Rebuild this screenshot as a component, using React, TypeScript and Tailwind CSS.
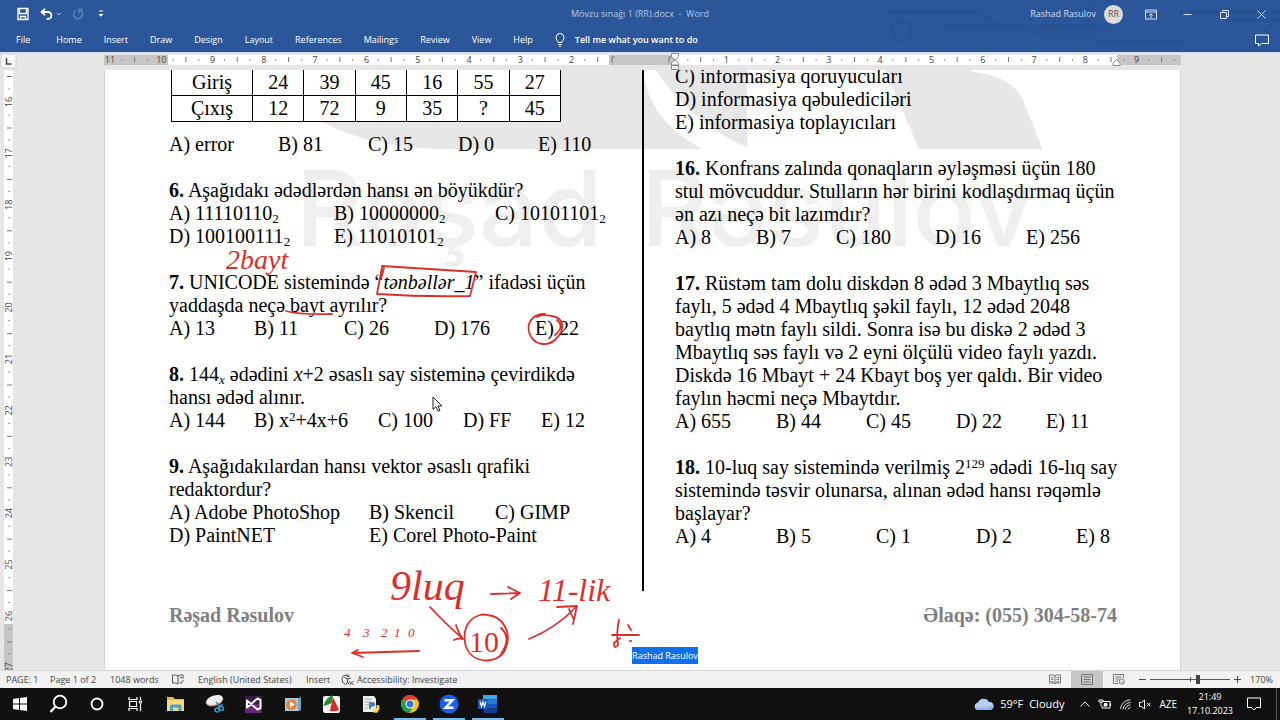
import type { ReactNode } from "react";

const TABS = ["File", "Home", "Insert", "Draw", "Design", "Layout", "References", "Mailings", "Review", "View", "Help"];

const TABLE_ROWS = [
  ["Giriş", "24", "39", "45", "16", "55", "27"],
  ["Çıxış", "12", "72", "9", "35", "?", "45"],
];

/* ---------- title bar ---------- */

function TitleBar() {
  return (
    <header className="relative h-[52px] shrink-0 bg-[#2b579a] text-[9px] text-white">
      <svg className="pointer-events-none absolute top-0 right-0" width="400" height="52" fill="none" stroke="#234c8b" strokeWidth="3" opacity="0.4">
        <path d="M8 12h90l24 14h100M60 26h80l20 9h60M215 42h90M300 12h100M345 20h55" />
        <circle cx="22" cy="31" r="10" />
        <circle cx="222" cy="14" r="16" />
        <path d="M372 50l22-30" />
      </svg>
      <div className="relative flex h-7 items-center justify-between">
        <div className="flex items-center pl-4">
          <button aria-label="Save" className="flex w-6 items-center">
            <svg width="14" height="14" viewBox="0 0 14 14" fill="none" stroke="#fff" strokeWidth="1.3">
              <path d="M2 1.500h10v11H2zM3.500 1.500v5h7v-5M4.500 12.500V9.500h5v3" />
            </svg>
          </button>
          <button aria-label="Undo" className="flex w-4 items-center">
            <svg width="13" height="12" viewBox="0 0 13 12" fill="none" stroke="#fff" strokeWidth="1.8">
              <path d="M5 .8L1.500 4 5 7.200M1.800 4H8a3.300 3.300 0 0 1 0 6.800H6.500" />
            </svg>
          </button>
          <button aria-label="Undo options" className="flex w-4 items-center">
            <svg width="6" height="4" viewBox="0 0 6 4" fill="none" stroke="#a9bddd"><path d="M.8.8L3 3 5.200.8" /></svg>
          </button>
          <button aria-label="Redo" className="flex w-[26px] items-center">
            <svg width="12" height="13" viewBox="0 0 12 13" fill="none" stroke="#6585b8" strokeWidth="1.500">
              <path d="M3.500 2.500a4.500 4.500 0 1 0 5 0M7 5.500V1.500h4" />
            </svg>
          </button>
          <button aria-label="Customize toolbar">
            <svg width="6" height="8" viewBox="0 0 6 8"><path d="M1 1h4" stroke="#fff" /><path d="M.5 4h5L3 6.800z" fill="#fff" /></svg>
          </button>
        </div>
        <div className="flex items-center">
          <span className="text-[#cfdaec]">Rashad Rasulov</span>
          <span className="ml-2 flex size-[19px] items-center justify-center rounded-full bg-[#dcdcdc] text-[#555]">RR</span>
          <div className="ml-[9px] flex items-center text-[#d5dff0]">
            <button aria-label="Ribbon display options" className="flex w-[37px] justify-center">
              <svg width="12" height="11" viewBox="0 0 12 11" fill="none" stroke="currentColor"><path d="M.5 1h11v9H.5zM.5 3h11M6 9V4.800M4.200 6.500L6 4.800l1.800 1.700" /></svg>
            </button>
            <button aria-label="Minimize" className="flex w-[37px] justify-center">
              <svg width="9" height="9" viewBox="0 0 9 9" stroke="currentColor"><path d="M.5 4.500h8" /></svg>
            </button>
            <button aria-label="Restore" className="flex w-[37px] justify-center">
              <svg width="9" height="9" viewBox="0 0 9 9" fill="none" stroke="currentColor"><path d="M.5 2.500h6v6h-6zM2.500 2.500v-2h6v6h-2" /></svg>
            </button>
            <button aria-label="Close" className="flex w-[37px] justify-center">
              <svg width="9" height="9" viewBox="0 0 9 9" stroke="currentColor"><path d="M.5.5l8 8M8.500.5l-8 8" /></svg>
            </button>
          </div>
        </div>
        <h1 className="pointer-events-none absolute inset-x-0 text-center text-[#b5c6e2]">Mövzu sınağı 1 (RR).docx&nbsp; -&nbsp; Word</h1>
      </div>
      <nav className="relative flex h-6 items-center gap-[22px] pl-4">
        {TABS.map((t) => (
          <button key={t} className={t === "File" ? "mr-1" : ""}>{t}</button>
        ))}
        <button className="flex items-center gap-[10px] font-semibold">
          <svg width="10" height="14" viewBox="0 0 10 14" fill="none" stroke="#fff">
            <path d="M3 9.500C3 7.500 1 7 1 4.500a4 4 0 0 1 8 0C9 7 7 7.500 7 9.500zM3.200 11.500h3.600M4 13.200h2" />
          </svg>
          Tell me what you want to do
        </button>
        <button aria-label="Comments" className="mr-[11px] ml-auto">
          <svg width="14" height="13" viewBox="0 0 14 13" fill="none" stroke="#fff"><path d="M.5 1h13v8.500H6.500L3.500 12V9.500h-3z" /></svg>
        </button>
      </nav>
    </header>
  );
}

/* ---------- rulers ---------- */

const UNIT = 51.3;

function Ticks({ from, count, step }: { from: number; count: number; step: number }) {
  // quarter dots and half bars that follow each number
  return (
    <>
      {Array.from({ length: count }, (_, i) => {
        const x = from + i * step;
        return (
          <g key={i} stroke="#777">
            <path d={`M${x + step / 4} 9v1.500M${x + (step * 3) / 4} 9v1.500`} />
            <path d={`M${x + step / 2} 7v5`} />
          </g>
        );
      })}
    </>
  );
}

function HorizontalRuler() {
  return (
    <div className="relative h-[18px] shrink-0 overflow-hidden border-t border-[#cfdcec] bg-[#e6e6e6]">
      <svg width="1280" height="18" fontSize="9" textAnchor="middle" fill="#444">
        <rect x="1" y="1" width="15" height="14" fill="#fafafa" stroke="#d0d0d0" />
        <path d="M6.500 5v6h5" fill="none" stroke="#444" strokeWidth="1.500" />
        <rect x="104" y="2" width="64" height="10" fill="#c6c6c6" />
        <rect x="168" y="2" width="441" height="10" fill="#fff" />
        <rect x="609" y="2" width="66" height="10" fill="#c6c6c6" />
        <rect x="675" y="2" width="442" height="10" fill="#fff" />
        <rect x="1117" y="2" width="64" height="10" fill="#c6c6c6" />
        <g transform="translate(0 -3)">
          <Ticks from={109} count={9} step={UNIT} />
          <path d={`M${572 + UNIT / 4} 9v1.500M${572 + UNIT / 2} 7v5`} stroke="#777" />
          <Ticks from={675} count={9} step={UNIT} />
          <path d={`M${1136 + UNIT / 4} 9v1.500M${1136 + UNIT / 2} 7v5M${1136 + (UNIT * 3) / 4} 9v1.500`} stroke="#777" />
        </g>
        {[11, 10, 9, 8, 7, 6, 5, 4, 3, 2].map((n, i) => (
          <text key={n} x={110 + i * UNIT} y="10">{n}</text>
        ))}
        {[1, 2, 3, 4, 5, 6, 7, 8, 9].map((n) => (
          <text key={n} x={675 + n * UNIT} y="10">{n}</text>
        ))}
        <path d="M612 10V4h3M669 10V4h3" fill="none" stroke="#777" />
        <g fill="#fff" stroke="#888">
          <path d="M671.500.5h7v3l-3.500 4-3.500-4zM675 6.500l3.500 3.500v2h-7v-2zM671.500 12.500h7v4h-7z" />
          <path d="M1116.500 6.500l3.500 3.500v2.500h-7V10z" />
        </g>
      </svg>
    </div>
  );
}

function VerticalRuler() {
  const marks = Array.from({ length: 12 }, (_, i) => i + 16);
  return (
    <div className="w-[17px] shrink-0 overflow-hidden">
      <svg width="17" height="600" fontSize="9" textAnchor="middle" fill="#444">
        <rect x="4" width="9" height="554" fill="#fff" />
        <rect x="4" y="554" width="9" height="46" fill="#c6c6c6" />
        <path d="M7 6.500h5M8.500 19h1.500" stroke="#777" />
        {marks.map((n, i) => {
          const y = 32 + i * 51.4;
          return (
            <g key={n}>
              <text transform={`translate(12 ${y}) rotate(-90)`}>{n}</text>
              <path d={`M8.500 ${y + 13}h1.500M7 ${y + 26}h5M8.500 ${y + 38}h1.500`} stroke="#777" />
            </g>
          );
        })}
      </svg>
    </div>
  );
}

/* ---------- document ---------- */

function Sub({ children }: { children: ReactNode }) {
  return <span className="relative top-[3px] text-[13px] leading-none">{children}</span>;
}

function Sup({ children }: { children: ReactNode }) {
  return <span className="relative -top-[6px] text-[13px] leading-none">{children}</span>;
}

function Options({ cols, items }: { cols: string; items: ReactNode[] }) {
  return (
    <div className={`grid ${cols}`}>
      {items.map((it, i) => (
        <span key={i}>{it}</span>
      ))}
    </div>
  );
}

function Watermark() {
  return (
    <svg className="pointer-events-none absolute top-0 left-0" width="1076" height="600" viewBox="105 70 1076 600">
      <g fill="#e7e7e7">
        <path d="M270 70H643Q648 120 702 149H440Q370 147 322 122Q290 100 270 70z" />
        <path d="M656 70H747V147Q722 138 690 110Q670 92 656 70z" />
        <path d="M885 70H970L974 72Q1010 76 1022 98Q1032 122 1042 149H919z" />
      </g>
      <g fill="#efefef" fontFamily="Inter, sans-serif" fontSize="104" fontWeight="500">
        <text x="296" y="246">Rəşad</text>
        <text x="641" y="246">Rəsulov</text>
      </g>
    </svg>
  );
}

/** Pen strokes and handwritten notes over the page. */
function Ink() {
  return (
    <svg className="pointer-events-none absolute top-0 left-0" width="1076" height="600" viewBox="105 70 1076 600">
      <g fill="none" stroke="#d9302c" strokeWidth="1.800" strokeLinecap="round" strokeLinejoin="round">
        <path d="M382 267L377 294Q425 297 470 296L476 272Q430 269 382 266M381 279L384 268" />
        <path d="M286 311Q300 315 332 314" />
        <path d="M545 314C532 314 527 323 529 332C533 346 548 347 556 339C565 330 565 318 552 316Q541 314 537 317M557 320Q565 327 555 335" />
        <path d="M491 594L519 593M508 587L520 593L511 599" />
        <path d="M430 607Q447 625 463 639M456 625Q459 634 463 639Q458 638 454 640" />
        <path d="M529 639Q556 628 575 608M557 607L577 606L573 624M569 609L573 618" />
        <path d="M480 615C466 619 462 633 466 647C474 665 498 664 505 650C513 633 503 616 487 615Q483 614 480 615M501 628Q512 638 501 654" />
        <path d="M419 651L352 653M358 650L352 653L363 657" />
        <path d="M612 635L639 635M619 620Q616 634 618 645Q614 650 614 643L620 638M628 625L631 630M630 641h1" />
      </g>
      <g fill="#d9302c" fontFamily="'Liberation Serif', serif" fontStyle="italic">
        <text x="226" y="269" fontSize="28">2bayt</text>
        <text x="390" y="600" fontSize="42">9luq</text>
        <text x="538" y="601" fontSize="32">11-lik</text>
        <text x="469" y="652" fontSize="30" fontStyle="normal">10</text>
        <text x="344 363 381 394 408" y="637" fontSize="13">43210</text>
      </g>
    </svg>
  );
}

function LeftColumn() {
  return (
    <div className="w-[472px] shrink-0 pl-16">
      <table className="ml-[2px] w-[390px] table-fixed border-collapse bg-white text-center">
        <colgroup>
          <col className="w-[81px]" />
        </colgroup>
        <tbody>
          {TABLE_ROWS.map((row, r) => (
            <tr key={r} className={r === 0 ? "h-[25px]" : "h-[26px]"}>
              {row.map((cell, c) => (
                <td key={c} className="border border-t-0 border-black p-0">{cell}</td>
              ))}
            </tr>
          ))}
        </tbody>
      </table>
      <div className="mt-[11px] flex flex-col gap-[23px]">
        <Options cols="grid-cols-[109px_90px_90px_80px_auto]" items={["A) error", "B) 81", "C) 15", "D) 0", "E) 110"]} />
        <section>
          <p><b>6.</b> Aşağıdakı ədədlərdən hansı ən böyükdür?</p>
          <Options
            cols="grid-cols-[165px_161px_auto]"
            items={[
              <>A) 11110110<Sub>2</Sub></>,
              <>B) 10000000<Sub>2</Sub></>,
              <>C) 10101101<Sub>2</Sub></>,
              <>D) 100100111<Sub>2</Sub></>,
              <>E) 11010101<Sub>2</Sub></>,
            ]}
          />
        </section>
        <section>
          <p><b>7.</b> UNICODE sistemində “<i>tənbəllər_1</i>” ifadəsi üçün<br />yaddaşda neçə bayt ayrılır?</p>
          <Options cols="grid-cols-[85px_90px_90px_101px_auto]" items={["A) 13", "B) 11", "C) 26", "D) 176", "E) 22"]} />
        </section>
        <section>
          <p><b>8.</b> 144<Sub><i>x</i></Sub> ədədini <i>x</i>+2 əsaslı say sisteminə çevirdikdə<br />hansı ədəd alınır.</p>
          <Options
            cols="grid-cols-[85px_124px_85px_78px_auto]"
            items={["A) 144", <>B) x<Sup>2</Sup>+4x+6</>, "C) 100", "D) FF", "E) 12"]}
          />
        </section>
        <section>
          <p><b>9.</b> Aşağıdakılardan hansı vektor əsaslı qrafiki<br />redaktordur?</p>
          <Options
            cols="grid-cols-[200px_126px_auto]"
            items={["A) Adobe PhotoShop", "B) Skencil", "C) GIMP", "D) PaintNET", "E) Corel Photo-Paint"]}
          />
        </section>
      </div>
    </div>
  );
}

function RightColumn() {
  return (
    <div className="-mt-[5px] flex min-w-0 flex-1 flex-col gap-[23px] pl-[31px]">
      <p>C) informasiya qoruyucuları<br />D) informasiya qəbulediciləri<br />E) informasiya toplayıcıları</p>
      <section>
        <p><b>16.</b> Konfrans zalında qonaqların əyləşməsi üçün 180<br />stul mövcuddur. Stulların hər birini kodlaşdırmaq üçün<br />ən azı neçə bit lazımdır?</p>
        <Options cols="grid-cols-[81px_80px_99px_91px_auto]" items={["A) 8", "B) 7", "C) 180", "D) 16", "E) 256"]} />
      </section>
      <section>
        <p>
          <b>17.</b> Rüstəm tam dolu diskdən 8 ədəd 3 Mbaytlıq səs<br />
          faylı, 5 ədəd 4 Mbaytlıq şəkil faylı, 12 ədəd 2048<br />
          baytlıq mətn faylı sildi. Sonra isə bu diskə 2 ədəd 3<br />
          Mbaytlıq səs faylı və 2 eyni ölçülü video faylı yazdı.<br />
          Diskdə 16 Mbayt + 24 Kbayt boş yer qaldı. Bir video<br />
          faylın həcmi neçə Mbaytdır.
        </p>
        <Options cols="grid-cols-[101px_90px_90px_90px_auto]" items={["A) 655", "B) 44", "C) 45", "D) 22", "E) 11"]} />
      </section>
      <section>
        <p><b>18.</b> 10-luq say sistemində verilmiş 2<Sup>129</Sup> ədədi 16-lıq say<br />sistemində təsvir olunarsa, alınan ədəd hansı rəqəmlə<br />başlayar?</p>
        <Options cols="grid-cols-[101px_100px_100px_100px_auto]" items={["A) 4", "B) 5", "C) 1", "D) 2", "E) 8"]} />
      </section>
    </div>
  );
}

function Page() {
  return (
    <article className="relative mr-[99px] ml-[87px] flex-1 overflow-hidden border-x border-[#d4d4d4] bg-white font-['Liberation_Serif',serif] text-[20px] leading-[23px] whitespace-nowrap text-black">
      <Watermark />
      <div className="relative flex h-[521px]">
        <LeftColumn />
        <div className="ml-[65px] w-[2px] shrink-0 bg-black" />
        <RightColumn />
      </div>
      <footer className="relative mt-[13px] flex justify-between pr-[63px] pl-16 font-bold text-[#808080]">
        <span>Rəşad Rəsulov</span>
        <span>Əlaqə: (055) 304-58-74</span>
      </footer>
      <Ink />
      <svg className="absolute top-[326px] left-[327px]" width="11" height="17" viewBox="0 0 11 17" fill="#fff" stroke="#222">
        <path d="M1 1v12.500l3-2.800 2 4.600 2-.9-2-4.400h4z" />
      </svg>
      <span className="absolute top-[577px] left-[527px] flex h-[17px] w-[66px] items-center justify-center bg-[#0e71eb] font-['Open_Sans',sans-serif] text-[9px] text-white">
        Rashad Rasulov
      </span>
    </article>
  );
}

/* ---------- status bar ---------- */

function StatusBar() {
  return (
    <footer className="flex h-[18px] shrink-0 items-center border-t border-[#d6d6d6] bg-[#f2f2f2] pr-[7px] pl-[6px] text-[9px] text-[#444]">
      <span className="w-11">PAGE: 1</span>
      <span className="w-[60px]">Page 1 of 2</span>
      <span className="w-[62px]">1048 words</span>
      <button aria-label="Proofing" className="w-[26px]">
        <svg width="12" height="11" viewBox="0 0 12 11" fill="none" stroke="#555"><path d="M6 2Q4 .500.500 1v8Q4 8.500 6 10M6 2v8M6 2Q8 .500 11 1v4M7.500 8l1.500 1.500 2.500-3.500M8 3.500h2" /></svg>
      </button>
      <button className="w-[108px] text-left">English (United States)</button>
      <button className="w-[35px] text-left">Insert</button>
      <button className="flex items-center gap-[3px]">
        <svg width="13" height="12" viewBox="0 0 13 12" fill="none" stroke="#444"><path d="M6 1Q1 1 1 5.500 1 9 4 10M3.500 3.500l3 1.500 3.500-1M6.500 5v3l-2 3M6.500 8l1.500 2M8.500 7l4 4M12.500 7l-4 4" /><circle cx="7" cy="2" r="1" /></svg>
        Accessibility: Investigate
      </button>
      <div className="ml-auto flex h-full items-center">
        <button aria-label="Read mode" className="flex w-[33px] justify-center">
          <svg width="12" height="11" viewBox="0 0 12 11" fill="none" stroke="#777"><path d="M.5 1H5l1 1 1-1h4.500v8H7l-1 1-1-1H.5zM6 2v8M2 3.500h2.500M2 5.500h2.500M2 7.500h2.500M7.500 3.500H10M7.500 5.500H10M7.500 7.500H10" /></svg>
        </button>
        <button aria-label="Print layout" className="flex h-full w-8 items-center justify-center bg-[#c8c8c8]">
          <svg width="12" height="11" viewBox="0 0 12 11" fill="none" stroke="#777"><path d="M.5.500h11v10H.5zM2.500 3h7M2.500 5.500h7M2.500 8h7" /></svg>
        </button>
        <button aria-label="Web layout" className="flex w-8 justify-center">
          <svg width="12" height="11" viewBox="0 0 12 11" fill="none" stroke="#777"><path d="M5.500 9.500h-5V.500h10V4M2.500 3h6M2.500 5h4M2.500 7h2.500" /><circle cx="8.800" cy="7.500" r="2.600" /><path d="M8 7l2 1.500" /></svg>
        </button>
        <button aria-label="Zoom out" className="flex w-[15px] justify-center">
          <svg width="7" height="7" viewBox="0 0 7 7" stroke="#444"><path d="M0 3.500h7" /></svg>
        </button>
        <input
          type="range"
          aria-label="Zoom"
          defaultValue={60}
          className="h-[9px] w-20 appearance-none bg-[linear-gradient(#555,#555),linear-gradient(#555,#555)] bg-[length:100%_1px,1px_5px] bg-center bg-no-repeat [&::-webkit-slider-thumb]:h-[9px] [&::-webkit-slider-thumb]:w-1 [&::-webkit-slider-thumb]:appearance-none [&::-webkit-slider-thumb]:bg-[#444]"
        />
        <button aria-label="Zoom in" className="flex w-[15px] justify-center">
          <svg width="7" height="7" viewBox="0 0 7 7" stroke="#444"><path d="M0 3.500h7M3.500 0v7" /></svg>
        </button>
        <span className="w-7 text-right">170%</span>
      </div>
    </footer>
  );
}

/* ---------- taskbar ---------- */

const APPS: { name: string; open?: boolean; icon: ReactNode }[] = [
  { name: "Start", icon: <path d="M3 5l6-.9v5.400H3zM10 4l7-1v6.500h-7zM3 10.500h6v5.400L3 15zM10 10.500h7V17l-7-1z" fill="#fff" /> },
  {
    name: "Search",
    icon: <g fill="none" stroke="#fff" strokeWidth="1.800"><circle cx="11" cy="8" r="6.300" /><path d="M6.500 12.500L1.500 18" strokeWidth="2.200" /></g>,
  },
  { name: "Cortana", icon: <circle cx="9" cy="10" r="5.500" fill="none" stroke="#fff" strokeWidth="1.800" /> },
  {
    name: "Task view",
    icon: <path d="M2 3v2.500h8V3M2 17v-2.500h8V17M2.500 7.500h7v5h-7zM13.500 3v3M13.500 10v7M12.500 7h2v2h-2z" fill="none" stroke="#fff" strokeWidth="1.200" />,
  },
  {
    name: "File Explorer",
    icon: <><path d="M1 3h6l2 2h9v12H1z" fill="#e9b44c" /><path d="M1 6h17v11H1z" fill="#fbd775" /><path d="M4 17v-5q0-1.500 1.500-1.500h8.500q1.500 0 1.500 1.500v5h-3v-3.500h-5.500V17z" fill="#4aa0cf" /></>,
  },
  {
    name: "Snipping Tool",
    icon: <><ellipse cx="9.500" cy="7" rx="9" ry="5" fill="#c8868c" transform="rotate(-18 9.500 7)" /><ellipse cx="9.500" cy="6" rx="8.500" ry="4.500" fill="#f3eeee" transform="rotate(-18 9.500 6)" /><g fill="none" stroke="#3f93cb" strokeWidth="1.500"><path d="M11 8l4 5M18 10l-6 4" /><circle cx="12" cy="16" r="2" /><circle cx="16.500" cy="14.500" r="2" /></g></>,
  },
  {
    name: "Visual Studio",
    icon: <><path d="M1 2h17v17H1z" fill="#3a1a47" /><path d="M1 10h17v9H1z" fill="#672878" /><path d="M3 6.500v7l10.500-9 3 1.500v8l-3 1.500z" fill="none" stroke="#fff" strokeWidth="2" strokeLinejoin="round" /></>,
  },
  {
    name: "Media Player",
    icon: <><path d="M2 4h14l2-1v13l-2 1H2z" fill="#72a6c7" /><path d="M2 4h13v13H2z" fill="#a9cbdc" /><circle cx="8.500" cy="10.500" r="5.300" fill="#e78334" /><path d="M7 7.500l5 3-5 3z" fill="#fff" /></>,
  },
  {
    name: "Contest client",
    icon: <><rect x="1" y="2" width="17" height="17" rx="2" fill="#f3f3f3" /><path d="M11 1Q3 4 1.500 12l3.500-1 5-2z" fill="#218f3b" /><path d="M11 3l6 13Q12 18 8 17z" fill="#d72c22" /></>,
  },
  {
    name: "Python",
    icon: <><path d="M2 2h11l2 3v13H2z" fill="#eee" /><path d="M4 5h7M4 8h6M4 11h4M4 14h3" stroke="#aaa" /><path d="M8 12V9q0-1 3-1t3 1.500V12l-4 1v2H8.500q-1-1-.5-3z" fill="#4382b8" /><path d="M18.500 12v3l-2 3.500q-4 1-5-1V15l4-1v-3h2z" fill="#f7d65a" /></>,
  },
  {
    name: "Chrome",
    open: true,
    icon: <><circle cx="10" cy="10" r="9" fill="#fbc116" /><path d="M10 10L2.200 5.500A9 9 0 0 1 17.800 5.500H10z" fill="#e33b2e" /><path d="M2.200 5.500A9 9 0 0 0 9.500 19l4-7z" fill="#229d4f" /><circle cx="10" cy="10" r="4.500" fill="#fff" /><circle cx="10" cy="10" r="3.500" fill="#3576df" /></>,
  },
  {
    name: "Zoom",
    open: true,
    icon: <><circle cx="10" cy="10" r="9.500" fill="#1760ec" /><path d="M5.500 6.200h8L6.500 13.800H14.500" fill="none" stroke="#fff" strokeWidth="2.400" /></>,
  },
  {
    name: "Word",
    open: true,
    icon: <><path d="M5 1h14v4.500H5z" fill="#41a5ee" /><path d="M5 5.500h14V10H5z" fill="#2b7cd3" /><path d="M5 10h14v4.500H5z" fill="#185abd" /><path d="M5 14.500h14V19H5z" fill="#103f91" /><rect x="0" y="5" width="10" height="10" rx="1" fill="#185abd" /><path d="M2 7.500l1.500 5L5 8l1.500 4.500L8 7.500" fill="none" stroke="#fff" strokeWidth="1.200" /></>,
  },
];

function Taskbar() {
  return (
    <div className="flex h-8 shrink-0 items-center bg-[#101010] text-white">
      {APPS.map((a) => (
        <button
          key={a.name}
          aria-label={a.name}
          className="relative flex h-8 w-[39px] shrink-0 items-center justify-center"
        >
          <svg width="20" height="20" viewBox="0 0 20 20">{a.icon}</svg>
          {a.open && <span className="absolute bottom-0 h-[2px] w-8 bg-[#76b9ed]" />}
        </button>
      ))}
      <div className="ml-auto flex items-center">
        <button className="flex items-center text-[11px]">
          <svg width="20" height="14" viewBox="0 0 20 14"><path d="M4 13a3.800 3.800 0 0 1 0-7.500A6 6 0 0 1 15 5a4 4 0 0 1 1 8z" fill="#b9cdf3" /><path d="M4 13a3.800 3.800 0 0 1-3.500-3Q9 12 19.500 8.500A4 4 0 0 1 16 13z" fill="#92b1e8" /></svg>
          <span className="ml-[6px]">59°F</span>
          <span className="ml-[6px]">Cloudy</span>
        </button>
        <div className="ml-4 flex items-center gap-2">
          <svg width="10" height="6" viewBox="0 0 10 6" fill="none" stroke="#fff"><path d="M.5 5.500L5 1l4.500 4.500" /></svg>
          <svg width="14" height="11" viewBox="0 0 14 11" fill="none" stroke="#fff"><path d="M5 2.500h7v6.500H4V7M12.500 4.500v2.500M1 1v2h4V1M2 0v2M4 0v2M3 3v4" /><path d="M6.500 4.500H9v2.500H6z" fill="#fff" /></svg>
          <svg width="11" height="11" viewBox="0 0 11 11" fill="none" stroke="#ddd"><path d="M.5 10A10 10 0 0 1 10.500.8M3 10.500A7.500 7.500 0 0 1 10.500 3.500M5.500 10.500a5 5 0 0 1 5-4.500M8 10.500a2.500 2.500 0 0 1 2.500-2" /></svg>
          <svg width="12" height="11" viewBox="0 0 12 11" fill="none" stroke="#fff"><path d="M.5 3.500h2l3-2.500v9l-3-2.500h-2zM8 3.800l3.500 3.500M11.500 3.800L8 7.300" /></svg>
          <span className="text-[10px]">AZE</span>
        </div>
        <div className="ml-[10px] flex flex-col items-center text-[9px] leading-[14px]">
          <span>21:49</span>
          <span>17.10.2023</span>
        </div>
        <button aria-label="Notifications" className="ml-[14px]">
          <svg width="14" height="14" viewBox="0 0 14 14" fill="none" stroke="#fff"><path d="M.5 1h13v9.500H9.500L7 13l-2.500-2.500h-4z" /></svg>
        </button>
        <span className="mr-[3px] ml-[15px] h-8 w-px bg-[#555]" />
      </div>
    </div>
  );
}

export default function App() {
  return (
    <div className="flex h-screen flex-col overflow-hidden bg-[#e6e6e6] font-['Open_Sans',sans-serif]">
      <TitleBar />
      <HorizontalRuler />
      <main className="flex min-h-0 flex-1 overflow-hidden">
        <VerticalRuler />
        <Page />
      </main>
      <StatusBar />
      <Taskbar />
    </div>
  );
}
